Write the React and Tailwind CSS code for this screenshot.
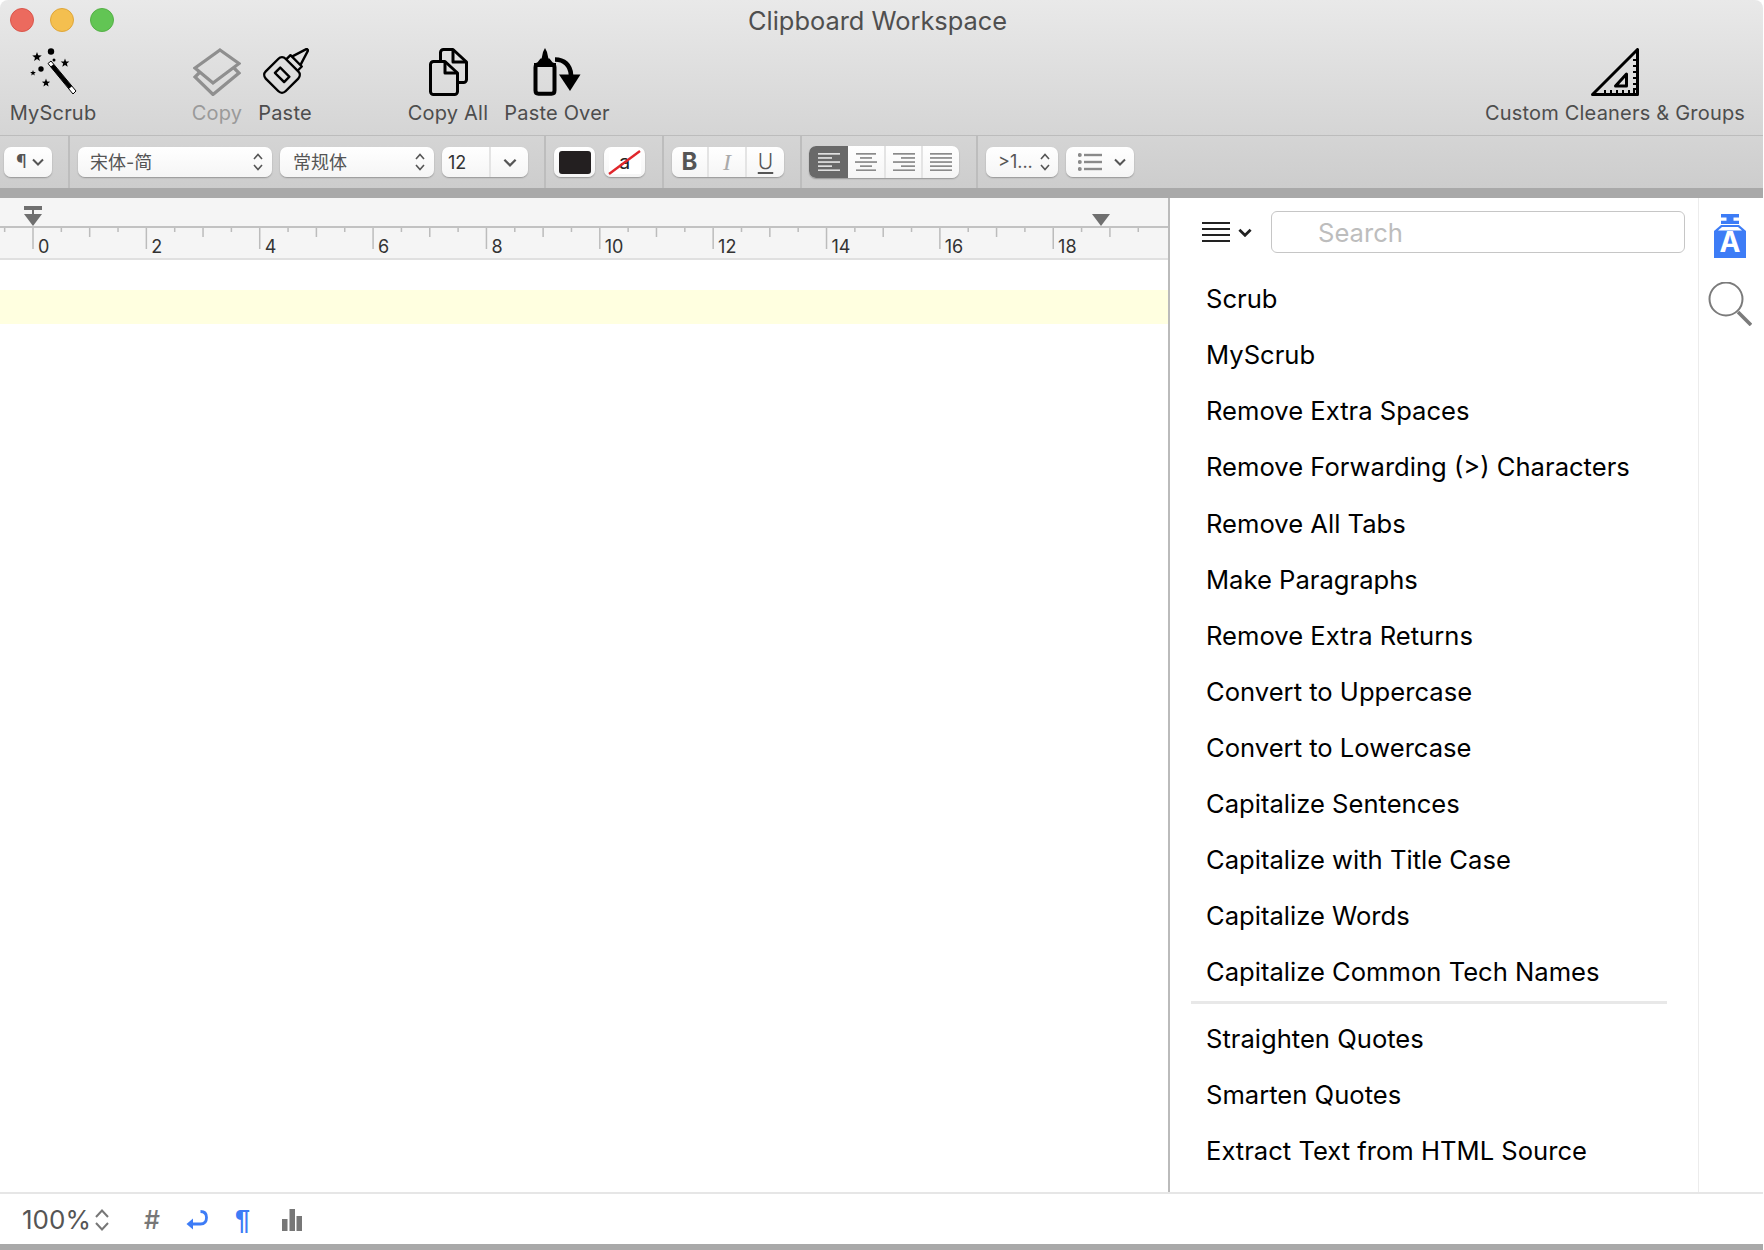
import React from 'react';

const cleaners = [
    'Scrub', 'MyScrub', 'Remove Extra Spaces', 'Remove Forwarding (>) Characters', 'Remove All Tabs',
    'Make Paragraphs', 'Remove Extra Returns', 'Convert to Uppercase', 'Convert to Lowercase',
    'Capitalize Sentences', 'Capitalize with Title Case', 'Capitalize Words', 'Capitalize Common Tech Names',
];
const quotes = ['Straighten Quotes', 'Smarten Quotes', 'Extract Text from HTML Source'];

function starPoints(cx, cy, r) {
    const pts = [];
    for (let i = 0; i < 10; i++) {
        const rad = i % 2 === 0 ? r : r * 0.42;
        const a = (Math.PI / 5) * i - Math.PI / 2;
        pts.push(`${cx + rad * Math.cos(a)},${cy + rad * Math.sin(a)}`);
    }
    return pts.join(' ');
}

const WandIcon = () => (
    <svg width="49" height="48" viewBox="0 0 49 48">
        <polygon points={starPoints(8, 9, 5)} fill="#000" />
        <polygon points={starPoints(36, 15, 4.6)} fill="#000" />
        <polygon points={starPoints(4, 25, 3)} fill="#000" />
        <polygon points={starPoints(17, 35, 4.4)} fill="#000" />
        <circle cx="22" cy="3.5" r="3.2" fill="#000" />
        <circle cx="25" cy="12" r="1.5" fill="#000" />
        <circle cx="12" cy="21" r="2.7" fill="#000" />
        <path d="M19 15.5 22 13 47 43 44 46Z" fill="#fff" stroke="#000" strokeWidth="1" strokeLinejoin="round" />
        <path d="M23 17.5 41.5 39.5" stroke="#000" strokeWidth="4" />
    </svg>
);

const CopyIcon = () => (
    <svg width="48" height="48" viewBox="0 0 48 48" fill="none" stroke="#8f8f8f" strokeWidth="3.2" strokeLinejoin="miter">
        <path d="M27 2 46 15.5 20 35 2 20Z" />
        <path d="M7 24 2 29 20 46.5 46 25 41 20" />
    </svg>
);

const GlueIcon = () => (
    <svg width="48" height="48" viewBox="0 0 48 48" fill="none" stroke="#000" strokeWidth="2.4" strokeLinejoin="round">
        <g transform="rotate(45 21 27)">
            <rect x="7" y="13" width="28" height="28" rx="5" />
            <path d="M13 13V7H29V13" />
            <path d="M15 7 20 -9H22L27 7" />
            <rect x="14.5" y="23" width="13" height="7.5" />
        </g>
    </svg>
);

const DocsIcon = () => (
    <svg width="39" height="48" viewBox="0 0 39 48" fill="none" stroke="#000" strokeWidth="3" strokeLinejoin="round">
        <path d="M11.5 13V4.5a3 3 0 0 1 3-3H24L37.5 14V31.5a3 3 0 0 1-3 3H30" />
        <path d="M24 1.5V14H37.5" />
        <path d="M1.5 16.5a3 3 0 0 1 3-3H16L28.5 25V43.5a3 3 0 0 1-3 3H4.5a3 3 0 0 1-3-3Z" />
        <path d="M16 13.5V25H28.5" />
    </svg>
);

const PasteOverIcon = () => (
    <svg width="48" height="48" viewBox="0 0 48 48">
        <path d="M12 0 14 4 15.5 11H8.5L10 4Z" fill="#000" />
        <path d="M5.5 16.5H18.5Q21.5 16.5 21.5 19.5V42.5Q21.5 45.7 18.5 45.7H5.5Q2.5 45.7 2.5 42.5V19.5Q2.5 16.5 5.5 16.5Z" fill="none" stroke="#000" strokeWidth="4" />
        <path d="M7.5 10.5H16.5L20 15H23V19H1V15H4Z" fill="#000" />
        <path d="M22 11.5C31 11.5 37.5 17 38 27" fill="none" stroke="#000" strokeWidth="4.6" />
        <path d="M26 26.5H47.5L37 43Z" fill="#000" />
    </svg>
);

const SetSquareIcon = () => (
    <svg width="48" height="48" viewBox="0 0 48 48" fill="none" stroke="#000" strokeLinejoin="round">
        <path d="M46.5 1.5V46.5H1.5Z" strokeWidth="3" />
        <path d="M24.5 38 35.5 26V38Z" strokeWidth="3" />
        {[12, 18, 24, 30, 36, 41].map((y) => <path key={y} d="M46 0h-4" transform={`translate(0 ${y})`} strokeWidth="2" />)}
        {[14, 20, 26, 32, 38, 43].map((x) => <path key={x} d="M0 46v-4" transform={`translate(${x} 0)`} strokeWidth="2" />)}
    </svg>
);

const BottleIcon = () => (
    <svg width="32" height="44" viewBox="0 0 32 44">
        <path d="M7 0H25V3.4H19.5V6.7H25V10H7V6.7H12.5V3.4H7Z" fill="#3d7cf6" />
        <path d="M7 11H25L32 17V44H0V17Z" fill="#3d7cf6" />
        <path d="M8 13H24L28 16.5H4Z" fill="#fff" />
        <text x="16" y="38" textAnchor="middle" fontSize="28" fontWeight="700" fill="#fff" fontFamily="Inter, sans-serif">A</text>
    </svg>
);

const MagnifierIcon = () => (
    <svg width="44" height="44" viewBox="0 0 44 44" fill="none" stroke="#7b7b7b">
        <circle cx="18" cy="17" r="16.5" strokeWidth="2" />
        <path d="M30 30 43 43" strokeWidth="3.6" />
    </svg>
);

const UpDown = ({ className = '', color = '#555' }) => (
    <svg className={className} width="10" height="18" viewBox="0 0 10 18" fill="none" stroke={color} strokeWidth="1.6">
        <path d="M1 6 5 1.5 9 6" />
        <path d="M1 12 5 16.5 9 12" />
    </svg>
);

const Chevron = ({ w = 12, h = 8, color = '#555', stroke = 2 }) => (
    <svg width={w} height={h} viewBox="0 0 12 8" fill="none" stroke={color} strokeWidth={stroke}>
        <path d="M1 1.5 6 6.5 11 1.5" />
    </svg>
);

const AlignLines = ({ kind, color = '#8a8a8a' }) => {
    const rows = {
        left: [[0, 22], [0, 14], [0, 22], [0, 14], [0, 22]],
        center: [[1, 20], [5, 12], [0, 22], [5, 12], [1, 20]],
        right: [[0, 22], [8, 14], [0, 22], [8, 14], [0, 22]],
        justify: [[0, 22], [0, 22], [0, 22], [0, 22], [0, 22]],
    }[kind];
    return (
        <svg width="22" height="18" viewBox="0 0 22 18">
            {rows.map(([x, w], i) => <rect key={i} x={x} y={i * 4.1} width={w} height="1.7" fill={color} />)}
        </svg>
    );
};

const ToolItem = ({ label, className = '', muted = false, children }) => (
    <div className={`flex flex-col items-center shrink-0 ${className}`}>
        <div className="h-[48px] flex items-start">{children}</div>
        <span className={`mt-[4px] text-[20px] leading-[26px] tracking-[0.2px] whitespace-nowrap ${muted ? 'text-[#9a9a9a]' : 'text-[#4d4d4d]'}`}>{label}</span>
    </div>
);

const Sep = ({ className = '' }) => <div className={`w-[2px] h-full bg-[#bdbdbd] shrink-0 ${className}`} />;

const btn = 'h-[30px] rounded-[7px] bg-linear-to-b from-[#ffffff] to-[#f5f5f5] shadow-[0_1px_1.5px_rgba(0,0,0,0.28)] flex items-center shrink-0';

export default function App() {
    const ticks = [];
    for (let i = -1; i < 40; i++) {
        const x = 33 + i * 28.34;
        if (i < 0 || x > 1168) {
            if (i < 0) ticks.push([x, 4]);
            continue;
        }
        ticks.push([x, i % 4 === 0 ? 21 : i % 2 === 0 ? 9 : 4]);
    }

    return (
        <div className="w-[1763px] h-[1250px] flex flex-col bg-white rounded-t-[8px] overflow-hidden font-[Inter,'Noto_Sans_CJK_SC',sans-serif]">
            <header className="h-[188px] flex flex-col bg-linear-to-b from-[#e9e9e9] to-[#cdcdcd] shrink-0">
                {/* title bar */}
                <div className="h-[48px] flex items-start">
                    <div className="flex gap-[16px] pt-[8px] pl-[10px]">
                        <span className="size-[24px] rounded-full bg-[#ec6a5e] border border-[#d9564c]" />
                        <span className="size-[24px] rounded-full bg-[#f4bf4f] border border-[#dea63a]" />
                        <span className="size-[24px] rounded-full bg-[#62c554] border border-[#55b047]" />
                    </div>
                    <h1 className="ml-[634px] pt-[5px] text-[25.4px] leading-[32px] font-normal text-[#4f4f4f] whitespace-nowrap">Clipboard Workspace</h1>
                </div>

                {/* toolbar */}
                <div className="h-[88px] flex items-start pl-[11px] pr-[18px] border-b-[1.5px] border-[#bcbcbc]">
                    <ToolItem label="MyScrub" className="w-[84px]"><WandIcon /></ToolItem>
                    <ToolItem label="Copy" muted className="w-[48px] ml-[98px]"><CopyIcon /></ToolItem>
                    <ToolItem label="Paste" className="w-[52px] ml-[18px]"><GlueIcon /></ToolItem>
                    <ToolItem label="Copy All" className="w-[78px] ml-[98px]"><DocsIcon /></ToolItem>
                    <ToolItem label="Paste Over" className="w-[104px] ml-[18px]"><PasteOverIcon /></ToolItem>
                    <ToolItem label="Custom Cleaners & Groups" className="w-[260px] ml-auto"><SetSquareIcon /></ToolItem>
                </div>

                {/* format bar */}
                <div className="h-[52px] flex items-center text-[#555]">
                    <div className={`${btn} ml-[4px] w-[48px] gap-[5px] pl-[12px]`}>
                        <span className="text-[18px] leading-none">¶</span>
                        <Chevron />
                    </div>
                    <Sep className="ml-[16px]" />
                    <div className={`${btn} ml-[8px] w-[194px] pl-[12px] pr-[9px] justify-between`}>
                        <span className="text-[18px]">宋体-简</span>
                        <UpDown />
                    </div>
                    <div className={`${btn} ml-[8px] w-[154px] pl-[13px] pr-[9px] justify-between`}>
                        <span className="text-[18px]">常规体</span>
                        <UpDown />
                    </div>
                    <div className={`${btn} ml-[8px] w-[86px]`}>
                        <span className="w-[49px] h-full flex items-center pl-[6px] text-[18px] text-[#333] border-r-[2px] border-[#e4e4e4]">12</span>
                        <span className="flex-1 flex justify-center"><Chevron w={14} h={9} /></span>
                    </div>
                    <Sep className="ml-[16px]" />
                    <div className={`${btn} ml-[8px] w-[41px] justify-center`}>
                        <span className="w-[32px] h-[23px] rounded-[3px] bg-[#231f20]" />
                    </div>
                    <div className={`${btn} relative ml-[9px] w-[41px] justify-center overflow-hidden`}>
                        <span className="w-[32px] h-[24px] bg-white flex items-center justify-center text-[20px] leading-none text-[#222]">a</span>
                        <svg className="absolute left-[4px] top-[3px]" width="33" height="25" viewBox="0 0 33 25"><path d="M1 24 32 1" stroke="#e0262b" strokeWidth="2.4" /></svg>
                    </div>
                    <Sep className="ml-[17px]" />
                    <div className={`${btn} ml-[8px] w-[112px]`}>
                        <span className="w-[37px] h-full flex items-center justify-center text-[24px] font-bold border-r-[2px] border-[#e4e4e4]">B</span>
                        <span className="w-[38px] h-full flex items-center justify-center font-['Liberation_Serif',serif] text-[24px] italic text-[#aaa] border-r-[2px] border-[#e4e4e4]">I</span>
                        <span className="flex-1 h-full flex items-center justify-center text-[21px] font-light underline underline-offset-[3px]">U</span>
                    </div>
                    <Sep className="ml-[16px]" />
                    <div className={`${btn} ml-[7px] w-[150px] h-[32px] overflow-hidden`}>
                        <span className="w-[39px] h-full flex items-center justify-center bg-[#696969]"><AlignLines kind="left" color="#e0e0e0" /></span>
                        <span className="w-[38px] h-full flex items-center justify-center border-r-[2px] border-[#e4e4e4]"><AlignLines kind="center" /></span>
                        <span className="w-[37px] h-full flex items-center justify-center border-r-[2px] border-[#e4e4e4]"><AlignLines kind="right" /></span>
                        <span className="flex-1 h-full flex items-center justify-center"><AlignLines kind="justify" /></span>
                    </div>
                    <Sep className="ml-[17px]" />
                    <div className={`${btn} ml-[8px] w-[72px] pl-[12px] gap-[8px]`}>
                        <span className="text-[18px] leading-none whitespace-nowrap w-[34px]">&gt;1...</span>
                        <UpDown />
                    </div>
                    <div className={`${btn} ml-[8px] w-[68px] pl-[12px] gap-[12px]`}>
                        <svg width="24" height="18" viewBox="0 0 24 18" fill="#8a8a8a">
                            <circle cx="1.8" cy="2" r="2" /><circle cx="1.8" cy="9" r="2" /><circle cx="1.8" cy="16" r="2" />
                            <rect x="6" y="0.8" width="18" height="2.4" /><rect x="6" y="7.8" width="18" height="2.4" /><rect x="6" y="14.8" width="18" height="2.4" />
                        </svg>
                        <Chevron />
                    </div>
                </div>
            </header>

            <div className="h-[10px] bg-[#a9a9a9] shrink-0" />

            <main className="flex-1 flex min-h-0">
                {/* editor */}
                <section className="w-[1168px] shrink-0 flex flex-col">
                    <div className="h-[62px] bg-[#f5f5f5] border-b-[2px] border-[#e0e0e0]">
                        <div className="h-[28px] flex items-end justify-between pl-[24px] pr-[58px]">
                            <svg width="18" height="20" viewBox="0 0 18 20" fill="#6f6f6f">
                                <rect width="18" height="4" />
                                <path d="M0 8H18L9 20Z" />
                                <rect x="8" y="4" width="2" height="6" />
                            </svg>
                            <svg width="18" height="12" viewBox="0 0 18 12" fill="#6f6f6f"><path d="M0 0H18L9 12Z" /></svg>
                        </div>
                        <div className="relative h-[32px] border-t-[2px] border-[#c2c2c2]">
                            <svg className="absolute left-0 top-0" width="1168" height="24">
                                {ticks.map(([x, h], i) => <rect key={i} x={x - 0.75} y="0" width="1.5" height={h} fill="#bcbcbc" />)}
                            </svg>
                            <div className="flex pl-[38px] pt-[8.5px] text-[18px] leading-[20px] text-[#333]">
                                {[0, 2, 4, 6, 8, 10, 12, 14, 16, 18].map((n) => <span key={n} className="w-[113.35px] shrink-0">{n}</span>)}
                            </div>
                        </div>
                    </div>
                    <div className="h-[30px]" />
                    <div className="h-[34px] bg-[#ffffe0]" />
                </section>

                {/* cleaners list */}
                <section className="w-[530px] shrink-0 border-l-[2px] border-[#bbbbbb] flex flex-col">
                    <div className="h-[73.5px] shrink-0 pt-[13px] pl-[32px] flex items-start">
                        <div className="h-[42px] flex items-center gap-[8px]">
                            <svg width="28" height="20" viewBox="0 0 28 20" fill="#222">
                                <rect y="0" width="28" height="2" /><rect y="6" width="28" height="2" /><rect y="12" width="28" height="2" /><rect y="18" width="28" height="2" />
                            </svg>
                            <Chevron w={14} h={9} color="#222" stroke={2.4} />
                        </div>
                        <div className="ml-[19px] w-[414px] h-[42px] rounded-[6px] border-[1.5px] border-[#c6c6c6] pl-[46px] pt-[2px] flex items-center text-[25.6px] text-[#bdbdbd]">Search</div>
                    </div>
                    <ul className="pl-[36px] text-[25.6px] text-black">
                        {cleaners.map((c) => <li key={c} className="h-[56.05px] flex items-center whitespace-nowrap">{c}</li>)}
                    </ul>
                    <div className="h-[11px] pt-[1px] pl-[21px] shrink-0">
                        <div className="w-[476px] h-[3px] bg-[#e8e8e8]" />
                    </div>
                    <ul className="pl-[36px] text-[25.6px] text-black">
                        {quotes.map((c) => <li key={c} className="h-[56.05px] flex items-center whitespace-nowrap">{c}</li>)}
                    </ul>
                </section>

                {/* side icons */}
                <aside className="flex-1 border-l-[1.5px] border-[#ececec] flex flex-col items-start pl-[15px]">
                    <div className="mt-[16px]"><BottleIcon /></div>
                    <div className="mt-[24px] -ml-[6px]"><MagnifierIcon /></div>
                </aside>
            </main>

            {/* status bar */}
            <footer className="h-[52px] shrink-0 border-t-[2px] border-[#e6e6e6] flex items-center pl-[22px] pt-[2px] text-[#666]">
                <span className="w-[66px] text-[26px] leading-none text-[#555]">100%</span>
                <svg className="ml-[7px]" width="14" height="22" viewBox="0 0 14 22" fill="none" stroke="#777" strokeWidth="2">
                    <path d="M1 8 7 1.5 13 8" /><path d="M1 14 7 20.5 13 14" />
                </svg>
                <span className="ml-[35px] w-[16px] text-[25px] leading-none font-medium text-[#777]">#</span>
                <svg className="ml-[26px]" width="22" height="20" viewBox="0 0 22 20" fill="none" stroke="#3d7cf6" strokeWidth="2.8">
                    <path d="M6 14H14.5C18.5 14 20.5 11.5 20.5 7.5 20.5 4 18.5 1.5 14.5 1.5" />
                    <path d="M0.5 14 7 8.5V19.5Z" fill="#3d7cf6" stroke="none" />
                </svg>
                <span className="ml-[27px] w-[16px] font-['Liberation_Sans',sans-serif] text-[27px] leading-none font-bold text-[#3d7cf6]">¶</span>
                <svg className="ml-[31px]" width="20" height="22" viewBox="0 0 20 22" fill="#777">
                    <rect x="0" y="10" width="5.5" height="12" /><rect x="7.5" y="0" width="5.5" height="22" /><rect x="14.5" y="7" width="5.5" height="15" />
                </svg>
            </footer>

            <div className="h-[6px] bg-[#a9a9a9] shrink-0" />
        </div>
    );
}
